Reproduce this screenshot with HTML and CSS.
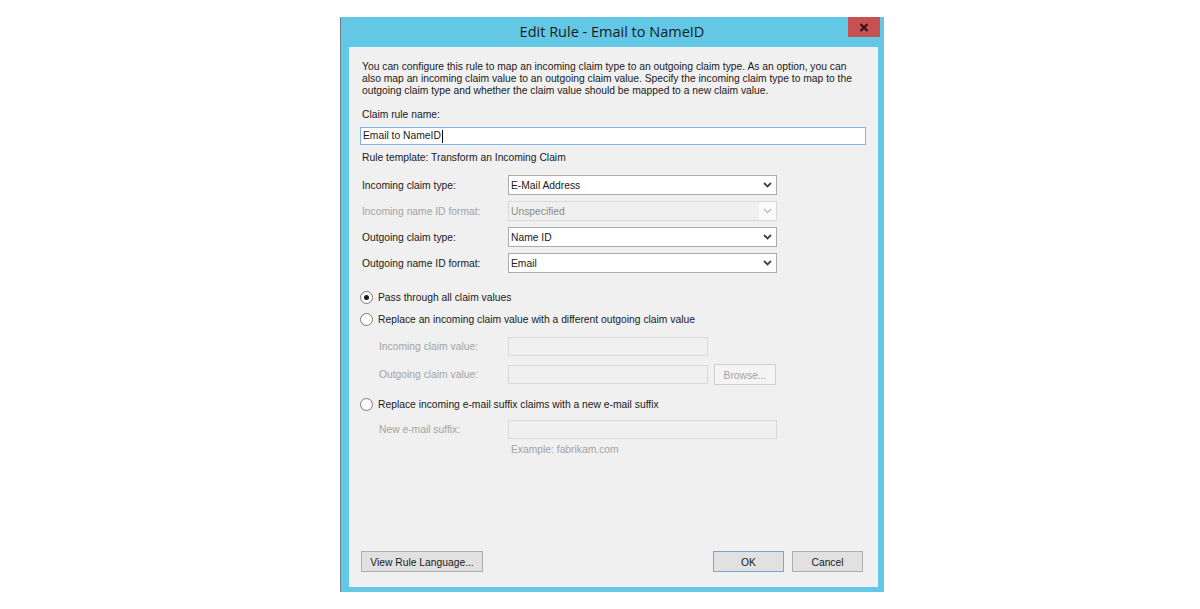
FILE: index.html
```html
<!DOCTYPE html>
<html lang="en">
<head>
    <meta charset="UTF-8">
    <meta name="viewport" content="width=device-width, initial-scale=1.0">
    <title>Edit Rule - Email to NameID</title>
    <link rel="stylesheet" href="styles.css">
</head>
<body>
    <div class="window">
        <div class="titlebar">
            <span class="title">Edit Rule - Email to NameID</span>
            <button class="close" title="Close">
                <svg width="10" height="9" viewBox="0 0 10 9"><path d="M1.5 1 L8.5 8 M8.5 1 L1.5 8" stroke="#2a1a1a" stroke-width="2.2" fill="none"/></svg>
            </button>
        </div>

        <div class="content">
            <p class="desc">You can configure this rule to map an incoming claim type to an outgoing claim type. As an option, you can also map an incoming claim value to an outgoing claim value. Specify the incoming claim type to map to the outgoing claim type and whether the claim value should be mapped to a new claim value.</p>

            <label class="label name-label">Claim rule name:</label>
            <div class="name-input">Email to NameID<span class="caret"></span></div>

            <p class="label template">Rule template: Transform an Incoming Claim</p>

            <div class="grid">
                <span class="label">Incoming claim type:</span>
                <div class="combo"><span>E-Mail Address</span><span class="arrow"><svg width="9" height="6" viewBox="0 0 9 6"><path d="M1 1 L4.5 4.5 L8 1" stroke="#444" stroke-width="1.8" fill="none"/></svg></span></div>

                <span class="label disabled">Incoming name ID format:</span>
                <div class="combo off"><span>Unspecified</span><span class="arrow"><svg width="9" height="6" viewBox="0 0 9 6"><path d="M1 1 L4.5 4.5 L8 1" stroke="#bcbcbc" stroke-width="1.4" fill="none"/></svg></span></div>

                <span class="label">Outgoing claim type:</span>
                <div class="combo"><span>Name ID</span><span class="arrow"><svg width="9" height="6" viewBox="0 0 9 6"><path d="M1 1 L4.5 4.5 L8 1" stroke="#444" stroke-width="1.8" fill="none"/></svg></span></div>

                <span class="label">Outgoing name ID format:</span>
                <div class="combo"><span>Email</span><span class="arrow"><svg width="9" height="6" viewBox="0 0 9 6"><path d="M1 1 L4.5 4.5 L8 1" stroke="#444" stroke-width="1.8" fill="none"/></svg></span></div>
            </div>

            <div class="radio first"><span class="dot checked"></span>Pass through all claim values</div>
            <div class="radio second"><span class="dot"></span>Replace an incoming claim value with a different outgoing claim value</div>

            <div class="sub sub-in">
                <span class="label disabled">Incoming claim value:</span>
                <div class="field short"></div>
            </div>
            <div class="sub sub-out">
                <span class="label disabled">Outgoing claim value:</span>
                <div class="field short"></div>
                <button class="btn browse">Browse...</button>
            </div>

            <div class="radio third"><span class="dot"></span>Replace incoming e-mail suffix claims with a new e-mail suffix</div>

            <div class="sub sub-suffix">
                <span class="label disabled">New e-mail suffix:</span>
                <div class="field long"></div>
            </div>
            <p class="example">Example: fabrikam.com</p>

            <div class="footer">
                <button class="btn view">View Rule Language...</button>
                <div class="actions">
                    <button class="btn ok">OK</button>
                    <button class="btn">Cancel</button>
                </div>
            </div>
        </div>
    </div>
</body>
</html>
```

FILE: styles.css
```css
body {
    margin: 0;
    background: #fff;
    font-family: 'Liberation Sans', Arial, sans-serif;
    font-size: 10.3px;
    color: #1a1a1a;
}

.window {
    width: 542px;
    height: 573px;
    margin: 17px 0 0 340px;
    background: #63c7e6;
    border: 1px solid #63c7e6;
    border-left-color: #6d7f86;
    display: flex;
    flex-direction: column;
}

.titlebar {
    height: 29px;
    display: flex;
    justify-content: center;
    align-items: center;
    position: relative;
}

.title {
    font-family: 'Open Sans', 'Noto Sans', sans-serif;
    font-size: 14.5px;
    color: #1a1a1a;
    margin-top: -3px;
}

/* close box sits over the title bar, top right */
.close {
    position: absolute;
    top: -1px;
    right: 3px;
    width: 32px;
    height: 20px;
    border: none;
    padding: 0;
    background: #c75050;
    display: flex;
    align-items: center;
    justify-content: center;
}

.content {
    flex: 1;
    margin: 0 5px 4px 8px;
    background: #f0f0f0;
    padding: 14px 12px 15px 13px;
    display: flex;
    flex-direction: column;
}

p {
    margin: 0;
}

.desc {
    line-height: 12px;
}

.label {
    line-height: 12px;
    white-space: nowrap;
}

.disabled {
    color: #a3a3a3;
}

.name-label {
    margin-top: 12px;
}

.name-input {
    margin: 6px 0 0 -2px;
    height: 16px;
    line-height: 16px;
    padding-left: 2px;
    background: #fff;
    border: 1px solid #7eb4ea;
    display: flex;
    align-items: center;
}

.caret {
    display: inline-block;
    width: 1px;
    height: 13px;
    background: #000;
    margin-left: 1px;
}

.template {
    margin-top: 7px;
}

.grid {
    margin-top: 11px;
    display: grid;
    grid-template-columns: 146px 269px;
    grid-auto-rows: 20px;
    row-gap: 6px;
    align-items: center;
}

.grid .label {
    padding-top: 2px;
}

.combo {
    height: 18px;
    border: 1px solid #acacac;
    background: #fff;
    display: flex;
    align-items: center;
    justify-content: space-between;
    padding-left: 2px;
}

.combo .arrow {
    width: 17px;
    height: 18px;
    display: flex;
    align-items: center;
    justify-content: center;
}

.combo.off {
    background: #f0f0f0;
    border-color: #d9d9d9;
    color: #8a8a8a;
}

.combo.off .arrow {
    background: #fafafa;
}

.radio {
    display: flex;
    align-items: center;
    height: 16px;
    margin-left: -2px;
}

.radio.first {
    margin-top: 16px;
}

.radio.second {
    margin-top: 6px;
}

.radio.third {
    margin-top: 11px;
}

.dot {
    width: 11px;
    height: 11px;
    border: 1px solid #7a7a7a;
    border-radius: 50%;
    background: #fff;
    margin-right: 5px;
    display: flex;
    align-items: center;
    justify-content: center;
}

.dot.checked::after {
    content: '';
    width: 5px;
    height: 5px;
    border-radius: 50%;
    background: #1c1c1c;
}

.sub {
    display: grid;
    grid-template-columns: 129px auto auto;
    align-items: center;
    justify-content: start;
    padding-left: 17px;
}

.sub-in {
    margin-top: 10px;
}

.sub-out {
    margin-top: 8px;
}

.sub-suffix {
    margin-top: 8px;
}

.field {
    height: 17px;
    border: 1px solid #d9d9d9;
    background: #f0f0f0;
}

.field.short {
    width: 198px;
}

.field.long {
    width: 267px;
}

.example {
    margin: 5px 0 0 149px;
    color: #a3a3a3;
    line-height: 12px;
}

.btn {
    font-family: 'Liberation Sans', Arial, sans-serif;
    font-size: 10.3px;
    color: #1a1a1a;
    height: 21px;
    padding: 1px 0 0;
    border: 1px solid #adadad;
    background: #e1e1e1;
}

.browse {
    width: 62px;
    margin-left: 6px;
    color: #a3a3a3;
    background: #f4f4f4;
    border-color: #d0d0d0;
}

.footer {
    margin-top: auto;
    display: flex;
    justify-content: space-between;
    margin-left: -1px;
    margin-right: 3px;
}

.view {
    width: 122px;
}

.actions {
    display: flex;
    gap: 8px;
}

.actions .btn {
    width: 71px;
}

.ok {
    width: 70px;
    border-color: #7aa5d4;
}
```
